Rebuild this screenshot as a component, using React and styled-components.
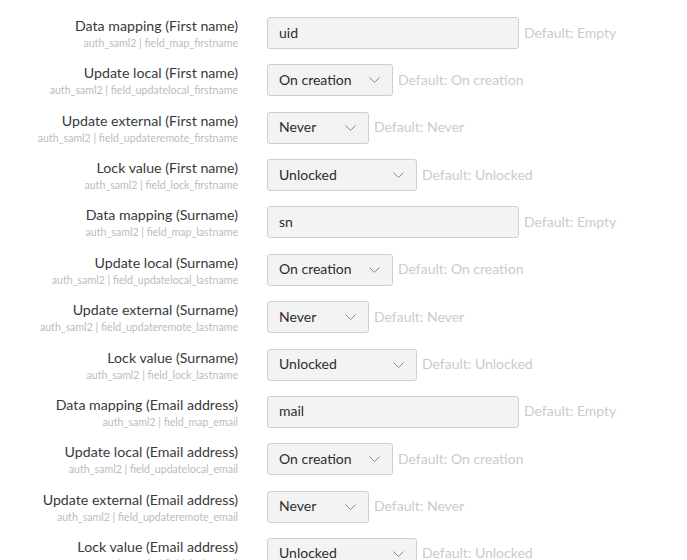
import React from "react";
import styled, { createGlobalStyle } from "styled-components";

const GlobalStyle = createGlobalStyle`
  body {
    margin: 0;
    background: #fff;
    font-family: Lato, "Open Sans", sans-serif;
    color: #373a3c;
  }
`;

const Form = styled.div`
  padding-top: 17px;
`;

const Row = styled.div`
  display: flex;
  align-items: flex-start;
  height: 47.36px;
`;

const LabelCol = styled.div`
  width: 238px;
  flex-shrink: 0;
  text-align: right;
  margin-right: 29px;
`;

const Label = styled.div`
  font-size: 14.2px;
  line-height: 17px;
  color: #373a3c;
`;

const Setting = styled.div`
  font-size: 10.6px;
  line-height: 13px;
  color: #bcbcbc;
  margin-top: 3px;
`;

const Control = styled.div`
  display: flex;
  align-items: center;
  height: 32px;
`;

const Box = styled.div`
  box-sizing: border-box;
  height: 32px;
  width: ${(p) => p.$width}px;
  background: #f3f3f3;
  border: 1px solid #cfcfcf;
  border-radius: 3px;
  padding: 0 12px 2px 11px;
  display: flex;
  align-items: center;
  justify-content: space-between;
  font-size: 14px;
  color: #2d2d2d;
`;

const Chevron = styled.svg`
  width: 11px;
  height: 6px;
  flex-shrink: 0;
  margin-top: 2px;
`;

const Default = styled.span`
  margin-left: 5px;
  margin-bottom: 2px;
  font-size: 14px;
  color: #cbcbcb;
`;

const groups = [
  { name: "First name", key: "firstname", map: "uid" },
  { name: "Surname", key: "lastname", map: "sn" },
  { name: "Email address", key: "email", map: "mail" },
];

const selects = {
  "On creation": 126,
  Never: 102,
  Unlocked: 150,
};

const rowsFor = (g) => [
  { label: `Data mapping (${g.name})`, field: `field_map_${g.key}`, value: g.map, def: "Empty", input: true },
  { label: `Update local (${g.name})`, field: `field_updatelocal_${g.key}`, value: "On creation", def: "On creation" },
  { label: `Update external (${g.name})`, field: `field_updateremote_${g.key}`, value: "Never", def: "Never" },
  { label: `Lock value (${g.name})`, field: `field_lock_${g.key}`, value: "Unlocked", def: "Unlocked" },
];

const App = () => {
  const rows = groups.flatMap(rowsFor);
  return (
    <>
      <GlobalStyle />
      <Form>
        {rows.map((r) => (
          <Row key={r.field}>
            <LabelCol>
              <Label>{r.label}</Label>
              <Setting>auth_saml2 | {r.field}</Setting>
            </LabelCol>
            <Control>
              <Box $width={r.input ? 252 : selects[r.value]}>
                <span>{r.value}</span>
                {!r.input && (
                  <Chevron viewBox="0 0 11 6">
                    <path d="M0.5 0.5 L5.5 5.5 L10.5 0.5" fill="none" stroke="#8a8a8a" strokeWidth="1" />
                  </Chevron>
                )}
              </Box>
              <Default>Default: {r.def}</Default>
            </Control>
          </Row>
        ))}
      </Form>
    </>
  );
};

export default App;
